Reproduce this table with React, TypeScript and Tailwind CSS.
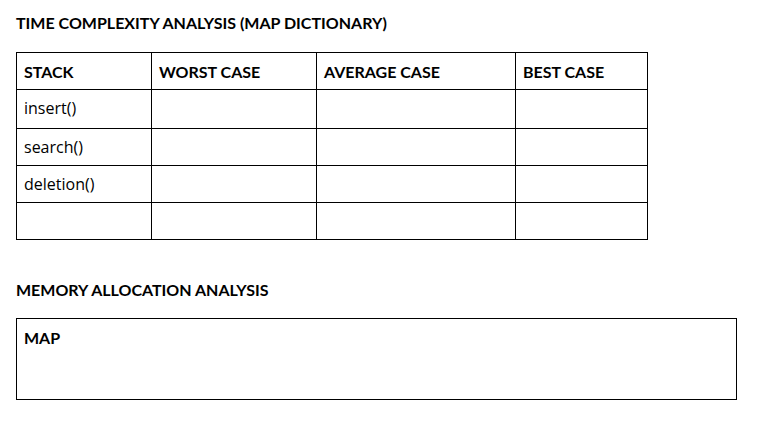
import React from "react";

// Rows of the time complexity table
const ops = ["insert()", "search()", "deletion()", ""];
const headers = ["STACK", "WORST CASE", "AVERAGE CASE", "BEST CASE"];

export default function App() {
  return (
    <div className="w-[775px] h-[447px] bg-white text-black pl-4 pt-[13px] font-[Lato,sans-serif]">
      <h1 className="text-[16px] leading-[20px] font-bold">
        TIME COMPLEXITY ANALYSIS (MAP DICTIONARY)
      </h1>

      <div className="mt-[19px] grid w-[632px] grid-cols-[134px_164px_198px_131px] grid-rows-[36px_38px_36px_36px_36px] gap-px bg-black p-px">
        {headers.map((h) => (
          <div key={h} className="bg-white pl-[7px] pt-[9px] text-[16px] leading-[20px] font-bold">
            {h}
          </div>
        ))}
        {ops.map((op, i) => (
          <React.Fragment key={i}>
            <div className="bg-white pl-[7px] pt-[7px] text-[16px] leading-[22px] font-[Open_Sans,sans-serif]">
              {op}
            </div>
            <div className="bg-white" />
            <div className="bg-white" />
            <div className="bg-white" />
          </React.Fragment>
        ))}
      </div>

      <h2 className="mt-[40px] text-[16px] leading-[20px] font-bold">MEMORY ALLOCATION ANALYSIS</h2>

      <div className="mt-[18px] h-[82px] w-[721px] border border-black pl-[7px] pt-[9px]">
        <div className="text-[16px] leading-[20px] font-bold">MAP</div>
      </div>
    </div>
  );
}
